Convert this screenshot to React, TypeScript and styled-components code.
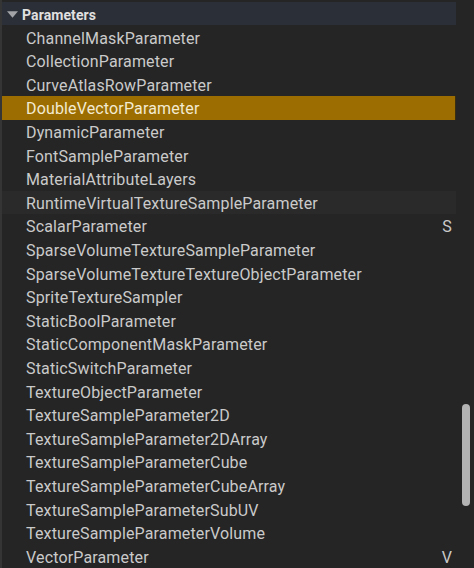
import styled, { createGlobalStyle } from "styled-components";

const GlobalStyle = createGlobalStyle`
    html, body {
        margin: 0;
        padding: 0;
        background-color: #242424;
    }
`;

const Panel = styled.div`
    display: flex;
    width: 474px;
    height: 568px;
    overflow: hidden;
    background-color: #252525;
    font-family: Roboto, "Liberation Sans", sans-serif;
`;

const List = styled.div`
    display: flex;
    flex-direction: column;
    width: 456px;
    flex-shrink: 0;
    border-left: 2px solid #353535;
    box-sizing: border-box;
`;

const ClippedRow = styled.div`
    height: 4.8px;
    overflow: hidden;
    display: flex;
    align-items: flex-end;
    padding-left: 24px;
    color: #c4c4c4;
    font-size: 16px;
    letter-spacing: 0.15px;
`;

const ClippedText = styled.span`
    display: block;
    line-height: 23.6px;
    margin-bottom: -1px;
`;

const CategoryHeader = styled.div`
    display: flex;
    align-items: center;
    gap: 4px;
    height: 23.6px;
    flex-shrink: 0;
    padding-left: 5px;
    padding-top: 3px;
    box-sizing: border-box;
    background-color: #2b2f37;
    color: #e0e0e0;
    font-size: 14px;
    font-weight: 700;
    letter-spacing: 0.1px;
`;

const Arrow = styled.svg`
    width: 11px;
    height: 11px;
    margin-top: -2px;
    fill: #a2a4a8;
`;

const Row = styled.div<{ $selected?: boolean; $hovered?: boolean }>`
    display: flex;
    align-items: center;
    justify-content: space-between;
    height: 23.6px;
    flex-shrink: 0;
    padding-left: 24px;
    padding-right: 2px;
    padding-top: 2px;
    box-sizing: border-box;
    font-size: 16px;
    letter-spacing: 0.15px;
    color: ${(p) => (p.$selected ? "#f3ead2" : "#cacaca")};
    background-color: ${(p) =>
        p.$selected ? "#9c6e02" : p.$hovered ? "#2a2a2a" : "transparent"};
    border-right: 1px solid
        ${(p) => (p.$selected ? "#3a2e10" : "transparent")};
`;

const Shortcut = styled.span`
    color: #cacaca;
    padding-right: 1px;
`;

const ScrollTrack = styled.div`
    flex: 1;
    display: flex;
    flex-direction: column;
    align-items: center;
    padding-top: 404px;
    padding-left: 2px;
`;

const ScrollThumb = styled.div`
    width: 8px;
    height: 102px;
    border-radius: 4px;
    background-color: #b3b3b3;
`;

const items: { name: string; key?: string }[] = [
    { name: "ChannelMaskParameter" },
    { name: "CollectionParameter" },
    { name: "CurveAtlasRowParameter" },
    { name: "DoubleVectorParameter" },
    { name: "DynamicParameter" },
    { name: "FontSampleParameter" },
    { name: "MaterialAttributeLayers" },
    { name: "RuntimeVirtualTextureSampleParameter" },
    { name: "ScalarParameter", key: "S" },
    { name: "SparseVolumeTextureSampleParameter" },
    { name: "SparseVolumeTextureTextureObjectParameter" },
    { name: "SpriteTextureSampler" },
    { name: "StaticBoolParameter" },
    { name: "StaticComponentMaskParameter" },
    { name: "StaticSwitchParameter" },
    { name: "TextureObjectParameter" },
    { name: "TextureSampleParameter2D" },
    { name: "TextureSampleParameter2DArray" },
    { name: "TextureSampleParameterCube" },
    { name: "TextureSampleParameterCubeArray" },
    { name: "TextureSampleParameterSubUV" },
    { name: "TextureSampleParameterVolume" },
    { name: "VectorParameter", key: "V" },
];

const App = () => {
    return (
        <>
            <GlobalStyle />
            <Panel>
                <List>
                    <ClippedRow>
                        <ClippedText>OutputGroup</ClippedText>
                    </ClippedRow>
                    <CategoryHeader>
                        <Arrow viewBox="0 0 10 10">
                            <path d="M0 2 L10 2 L5 8 Z" />
                        </Arrow>
                        Parameters
                    </CategoryHeader>
                    {items.map((item) => (
                        <Row
                            key={item.name}
                            $selected={item.name === "DoubleVectorParameter"}
                            $hovered={item.name === "RuntimeVirtualTextureSampleParameter"}
                        >
                            <span>{item.name}</span>
                            {item.key && <Shortcut>{item.key}</Shortcut>}
                        </Row>
                    ))}
                </List>
                <ScrollTrack>
                    <ScrollThumb />
                </ScrollTrack>
            </Panel>
        </>
    );
};

export default App;
